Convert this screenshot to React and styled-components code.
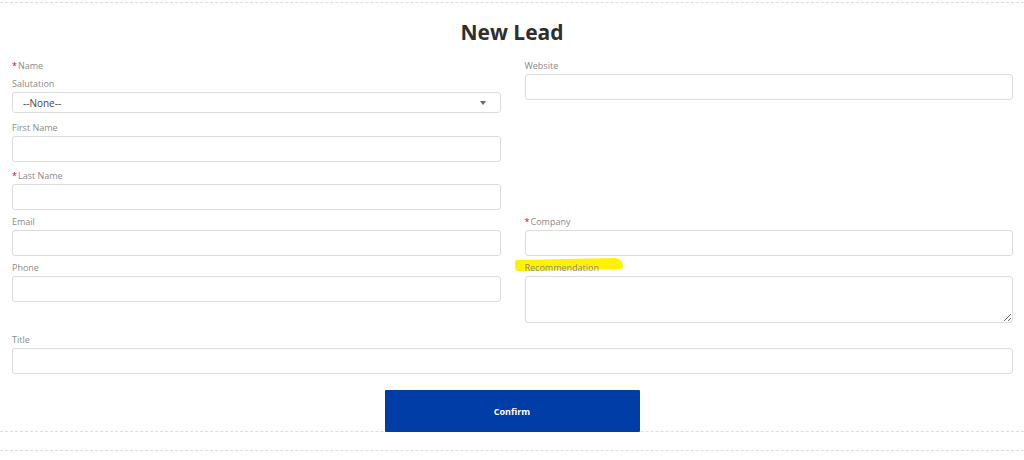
import React from "react";
import styled, { createGlobalStyle } from "styled-components";

const GlobalStyle = createGlobalStyle`
  html, body {
    margin: 0;
    padding: 0;
    background: #fff;
  }
  body {
    font-family: "Open Sans", "Liberation Sans", sans-serif;
    color: #333;
  }
  * {
    box-sizing: border-box;
  }
`;

const Page = styled.div`
  width: 1024px;
  height: 460px;
  overflow: hidden;
  background: #fff;
`;

const DashedRule = styled.div`
  border-top: 1px dashed #dedede;
  margin-top: ${(p) => p.$top || 0}px;
`;

const Heading = styled.h1`
  margin: 16px 0 15px;
  text-align: center;
  font-size: 21px;
  line-height: 26px;
  font-weight: 700;
  color: #2e2e2e;
`;

const Form = styled.form`
  padding: 0 11px 0 12px;
`;

const Grid = styled.div`
  display: grid;
  grid-template-columns: 1fr 1fr;
  column-gap: 24px;
  row-gap: 6px;
  align-items: start;
`;

const Column = styled.div`
  display: flex;
  flex-direction: column;
`;

const Field = styled.div`
  display: flex;
  flex-direction: column;
  margin-top: ${(p) => p.$mt || 0}px;
  grid-column: ${(p) => (p.$wide ? "1 / -1" : "auto")};
`;

const Label = styled.label`
  position: relative;
  isolation: isolate;
  display: block;
  font-size: 9px;
  line-height: 12px;
  height: 12px;
  margin-bottom: 2px;
  color: #8a8a8a;
  white-space: nowrap;

  ${(p) =>
    p.$marked &&
    `
    &::before {
      content: "";
      position: absolute;
      z-index: -1;
      left: -10px;
      top: -3px;
      width: 108px;
      height: 11px;
      background: #fff200;
      border-radius: 2px 8px 3px 4px;
      transform: rotate(-1.2deg);
    }
  `}
`;

const Required = styled.span`
  color: #d8001b;
  margin-right: 1px;
`;

const Input = styled.input`
  height: 26px;
  width: 100%;
  border: 1px solid #dcdcdc;
  border-radius: 3px;
  background: #fff;
  font-family: inherit;
  font-size: 10px;
  padding: 0 10px;
  outline: none;
`;

const SelectBox = styled.div`
  height: 21px;
  display: flex;
  align-items: center;
  justify-content: space-between;
  border: 1px solid #dcdcdc;
  border-radius: 3px;
  padding: 0 14px 0 10px;
  font-size: 10px;
  color: #444;
`;

const Caret = styled.span`
  width: 0;
  height: 0;
  border-left: 3px solid transparent;
  border-right: 3px solid transparent;
  border-top: 4px solid #666;
`;

const TextArea = styled.textarea`
  height: 47px;
  width: 100%;
  border: 1px solid #dcdcdc;
  border-radius: 3px;
  font-family: inherit;
  font-size: 10px;
  padding: 4px 10px;
  resize: vertical;
  outline: none;
  display: block;
`;

const ButtonRow = styled.div`
  display: flex;
  justify-content: center;
  margin-top: 16px;
  border-bottom: 1px dashed #dedede;
`;

const ConfirmButton = styled.button`
  width: 255px;
  height: 42px;
  margin-bottom: -1px;
  border: none;
  border-radius: 1px;
  background: #003da6;
  color: #fff;
  font-family: "Open Sans", "Liberation Sans", sans-serif;
  font-size: 9px;
  font-weight: 700;
  cursor: pointer;
`;

const App = () => {
  return (
    <>
      <GlobalStyle />
      <Page>
        <DashedRule $top={2} />
        <Heading>New Lead</Heading>
        <Form onSubmit={(e) => e.preventDefault()}>
          <Grid>
            <Column>
              <Label>
                <Required>*</Required>Name
              </Label>
              <Field $mt={4}>
                <Label>Salutation</Label>
                <SelectBox>
                  <span>--None--</span>
                  <Caret />
                </SelectBox>
              </Field>
              <Field $mt={9}>
                <Label>First Name</Label>
                <Input />
              </Field>
              <Field $mt={8}>
                <Label>
                  <Required>*</Required>Last Name
                </Label>
                <Input />
              </Field>
            </Column>
            <Field>
              <Label>Website</Label>
              <Input />
            </Field>

            <Field>
              <Label>Email</Label>
              <Input />
            </Field>
            <Field>
              <Label>
                <Required>*</Required>Company
              </Label>
              <Input />
            </Field>

            <Field>
              <Label>Phone</Label>
              <Input />
            </Field>
            <Field>
              <Label $marked>Recommendation</Label>
              <TextArea />
            </Field>

            <Field $wide $mt={5}>
              <Label>Title</Label>
              <Input />
            </Field>
          </Grid>
        </Form>
        <ButtonRow>
          <ConfirmButton type="button">Confirm</ConfirmButton>
        </ButtonRow>
        <DashedRule $top={18} />
      </Page>
    </>
  );
};

export default App;
